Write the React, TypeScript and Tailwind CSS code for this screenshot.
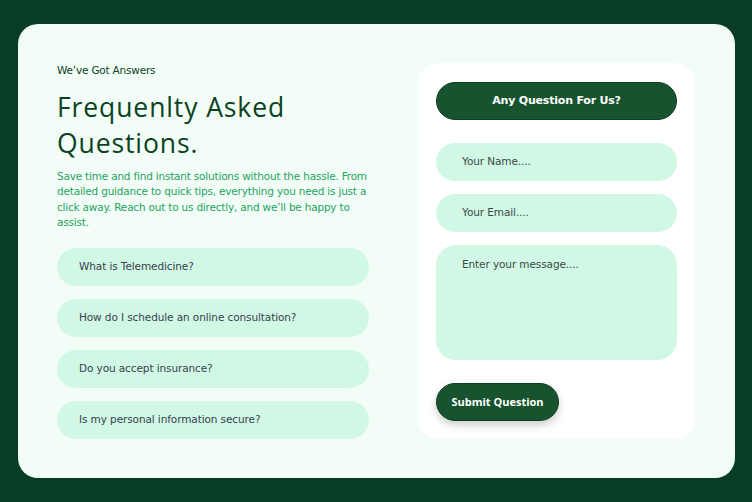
const faqs = [
  "What is Telemedicine?",
  "How do I schedule an online consultation?",
  "Do you accept insurance?",
  "Is my personal information secure?",
];

const body = { fontFamily: '"DejaVu Sans", "Noto Sans", sans-serif' };
const head = { fontFamily: '"Open Sans", "Noto Sans", sans-serif' };

export default function App() {
  return (
    <div className="w-[752px] h-[502px] bg-[#073d27] px-[18px] pt-[24px] pb-[24px]" style={body}>
      <div className="h-[454px] w-[717px] rounded-[20px] bg-[#f2fdf7] flex pl-[39px] pr-[40px] pt-[39px]">
        <div className="w-[312px] flex flex-col">
          <p className="text-[10.5px] text-[#0c3f22] leading-[14px] tracking-[-0.2px]">We’ve Got Answers</p>
          <h1 className="mt-[12px] text-[26.5px] leading-[36px] text-[#0b4322] tracking-[0.9px]" style={head}>
            Frequenlty Asked
            <br />
            Questions.
          </h1>
          <p className="mt-[8px] text-[10.5px] leading-[15.3px] text-[#1fa35e] tracking-[-0.2px]">
            Save time and find instant solutions without the hassle. From detailed guidance to quick tips, everything you need is just a click away. Reach out to us directly, and we’ll be happy to assist.
          </p>
          <div className="mt-[18px] flex flex-col gap-[13px]">
            {faqs.map((q) => (
              <div
                key={q}
                className="h-[38px] rounded-full bg-[#d1f8e4] flex items-center pl-[22px] text-[10.5px] text-[#374151] tracking-[-0.1px]"
              >
                {q}
              </div>
            ))}
          </div>
        </div>
        <div className="ml-auto w-[277px] h-[376px] rounded-[20px] bg-white px-[18px] pt-[19px]">
          <div className="h-[38px] rounded-full bg-[#17532f] border border-[#0f3f22] flex items-center justify-center text-white text-[11px] font-bold tracking-[-0.2px]">
            Any Question For Us?
          </div>
          <div className="mt-[23px] flex flex-col gap-[13px]">
            <div className="h-[38px] rounded-full bg-[#d1f8e4] flex items-center pl-[26px] text-[10.5px] text-[#3c4a47] tracking-[-0.1px]">
              Your Name....
            </div>
            <div className="h-[38px] rounded-full bg-[#d1f8e4] flex items-center pl-[26px] text-[10.5px] text-[#3c4a47] tracking-[-0.1px]">
              Your Email....
            </div>
            <div className="h-[115px] rounded-[20px] bg-[#d1f8e4] pl-[26px] pt-[12px] text-[10.5px] text-[#3c4a47] tracking-[-0.1px]">
              Enter your message....
            </div>
          </div>
          <div
            className="mt-[23px] h-[38px] w-[123px] rounded-full bg-[#17532f] border border-[#0f3f22] flex items-center justify-center text-white text-[11px] font-bold shadow-[0_4px_8px_rgba(0,0,0,0.2)]"
            style={head}
          >
            Submit Question
          </div>
        </div>
      </div>
    </div>
  );
}
